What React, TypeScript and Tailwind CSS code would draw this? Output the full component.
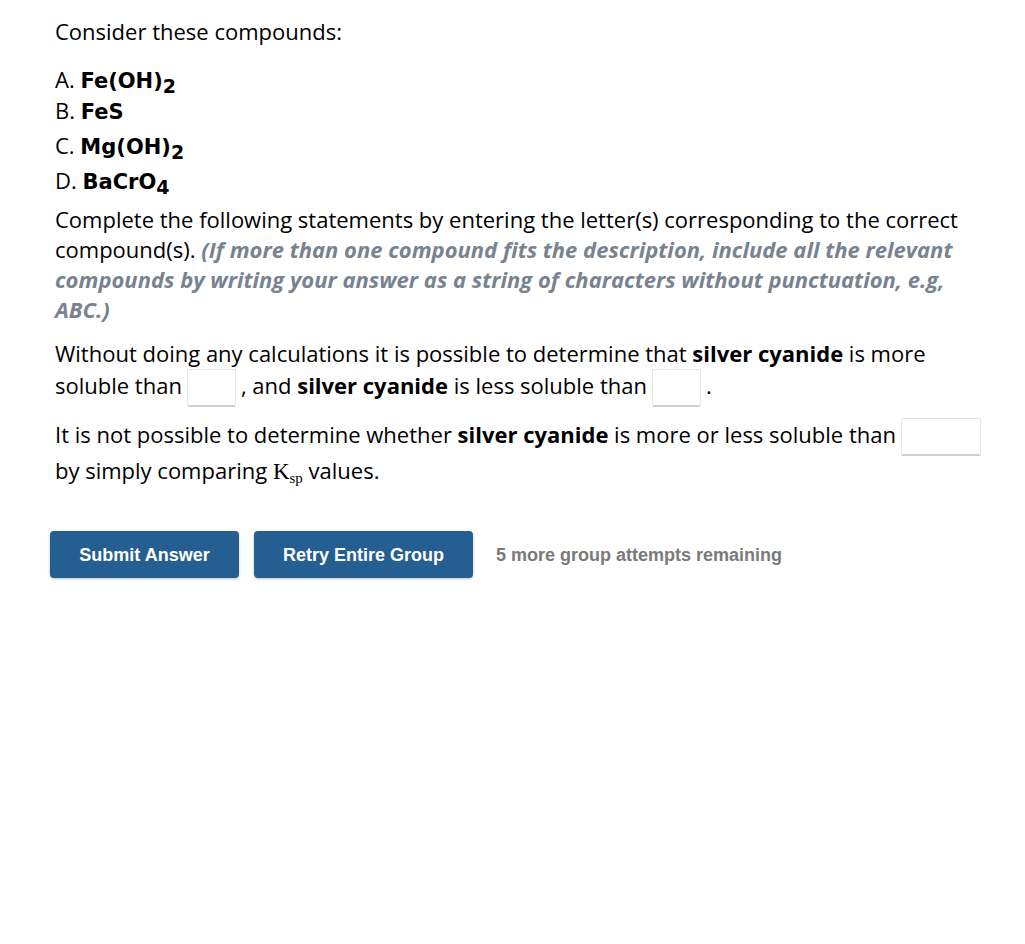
import React from 'react';

const Blank = ({ w = 'w-[49px]' }: { w?: string }) => (
  <input
    type="text"
    className={`${w} h-[38px] mx-[5px] align-middle border border-[#e6e6e6] border-b-2 border-b-[#cfcfcf] rounded-[2px] bg-white outline-none`}
  />
);

const Formula = ({ children }: { children: React.ReactNode }) => (
  <b className="font-['DejaVu_Sans',sans-serif] text-[21px] font-bold">{children}</b>
);

const Sub = ({ children }: { children: React.ReactNode }) => (
  <sub className="text-[19px] leading-[0] relative top-[5px] bottom-auto">{children}</sub>
);

export default function App() {
  return (
    <div className="min-h-screen bg-white text-black font-['Open_Sans',sans-serif] text-[22px] leading-[30px]">
      <div className="pl-[55px] pt-[16px] w-[995px]">
        <p>Consider these compounds:</p>

        <ul className="mt-[20px]">
          <li className="leading-[26px]">A. <Formula>Fe(OH)<Sub>2</Sub></Formula></li>
          <li className="leading-[32px]">B. <Formula>FeS</Formula></li>
          <li className="leading-[34px]">C. <Formula>Mg(OH)<Sub>2</Sub></Formula></li>
          <li className="leading-[32px]">D. <Formula>BaCrO<Sub>4</Sub></Formula></li>
        </ul>

        <p className="mt-[6px]">
          Complete the following statements by entering the letter(s) corresponding to the correct compound(s).{' '}
          <i className="font-bold text-[#778390]">
            (If more than one compound fits the description, include all the relevant compounds by writing your answer as a string of characters without punctuation, e.g, ABC.)
          </i>
        </p>

        <p className="mt-[13px] leading-[32px]">
          Without doing any calculations it is possible to determine that <b>silver cyanide</b> is more soluble than
          <Blank />, and <b>silver cyanide</b> is less soluble than
          <Blank />.
        </p>

        <p className="mt-[11px] leading-[28px]">
          It is not possible to determine whether <b>silver cyanide</b> is more or less soluble than
          <Blank w="w-[80px]" />
          by simply comparing{' '}
          <span className="font-['Liberation_Serif',serif] text-[23px]">
            K<sub className="text-[15px]">sp</sub>
          </span>{' '}
          values.
        </p>

        <div className="mt-[45px] -ml-[5px] flex items-center gap-[15px] font-['Liberation_Sans',Arial,sans-serif] font-bold text-[18px]">
          <button className="w-[189px] h-[47px] rounded-[4px] bg-[#255f91] text-white shadow-[0_1px_3px_rgba(0,0,0,0.25)]">
            Submit Answer
          </button>
          <button className="w-[219px] h-[47px] rounded-[4px] bg-[#255f91] text-white shadow-[0_1px_3px_rgba(0,0,0,0.25)]">
            Retry Entire Group
          </button>
          <span className="ml-[8px] text-[#7a7a7a]">5 more group attempts remaining</span>
        </div>
      </div>
    </div>
  );
}
